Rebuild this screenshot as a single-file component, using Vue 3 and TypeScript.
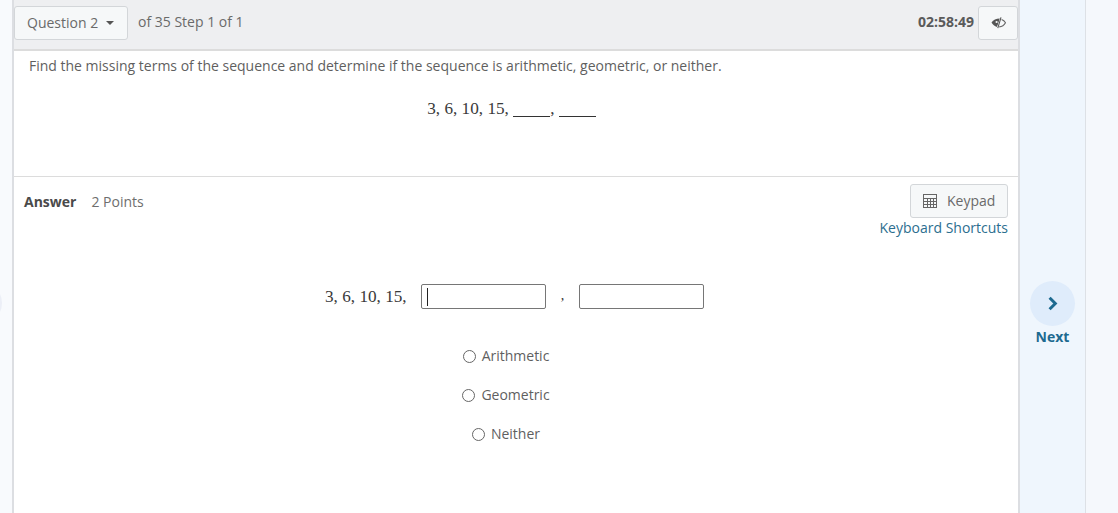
<script setup lang="ts">
const options = ['Arithmetic', 'Geometric', 'Neither'];
</script>

<template>
  <div class="page">
    <div class="gutter">
      <span class="prev-edge"></span>
    </div>
    <main class="main">
      <header class="topbar">
        <button class="btn question-btn">Question 2 <span class="caret"></span></button>
        <span class="step">of 35 Step 1 of 1</span>
        <span class="timer">02:58:49</span>
        <button class="btn eye-btn" aria-label="Hide timer">
          <svg width="15" height="12" viewBox="0 0 15 12">
            <path d="M0.5 5.6 C2.4 3 5 1.6 8.8 1.6 L6 10 C3.6 9.4 1.8 7.8 0.5 5.6 Z" fill="#555" />
            <circle cx="5.6" cy="5" r="1.1" fill="#f6f8f9" />
            <path d="M10.8 0.2 L7.2 11.6" stroke="#f6f8f9" stroke-width="2.6" />
            <path d="M10.6 2.6 C12.2 3.2 13.6 4.3 14.5 5.8 C13.2 8.2 11 9.7 8.2 9.9" fill="none" stroke="#666" stroke-width="1.1" />
            <path d="M10 0.4 L6.8 11.2" stroke="#555" stroke-width="1.1" />
          </svg>
        </button>
      </header>

      <section class="question">
        <p class="prompt">Find the missing terms of the sequence and determine if the sequence is arithmetic, geometric, or neither.</p>
        <div class="sequence">
          3, 6, 10, 15, <span class="blank"></span>, <span class="blank"></span>
        </div>
      </section>

      <section class="answer">
        <div class="answer-head">
          <div class="answer-title">
            <strong>Answer</strong>
            <span class="points">2 Points</span>
          </div>
          <div class="answer-tools">
            <button class="btn keypad-btn">
              <svg width="14" height="14" viewBox="0 0 14 14">
                <rect x="0.5" y="0.5" width="13" height="13" fill="none" stroke="#666" />
                <path d="M1 4.5H13M1 7.5H13M1 10.5H13M4.5 5V13M7.5 5V13M10.5 5V13" stroke="#666" stroke-width="1" />
              </svg>
              Keypad
            </button>
            <a class="shortcuts">Keyboard Shortcuts</a>
          </div>
        </div>

        <div class="fill-row">
          <span class="fill-text">3, 6, 10, 15,</span>
          <span class="fill-box first"><span class="cursor"></span></span>
          <span class="fill-comma">,</span>
          <span class="fill-box"></span>
        </div>

        <div class="options">
          <label v-for="opt in options" :key="opt" class="option">
            <span class="radio"></span>{{ opt }}
          </label>
        </div>
      </section>
    </main>

    <aside class="next-col">
      <button class="next-circle" aria-label="Next">
        <svg width="12" height="15" viewBox="0 0 12 15">
          <path d="M2.6 1.8 L8.3 7.5 L2.6 13.2" fill="none" stroke="#1d6a90" stroke-width="3" />
        </svg>
      </button>
      <span class="next-label">Next</span>
    </aside>
    <div class="far-col"></div>
  </div>
</template>

<style>
html, body { margin: 0; height: 100%; overflow: hidden; }
</style>

<style scoped>
.page {
  display: flex;
  width: 1118px;
  height: 513px;
  overflow: hidden;
  font-family: "Open Sans", sans-serif;
  font-size: 14px;
  color: #5f5f5f;
  background: #fff;
}
.gutter {
  position: relative;
  width: 12px;
  flex: none;
  background: #f8fafd;
}
.prev-edge {
  position: absolute;
  left: -18px;
  top: 288px;
  width: 20px;
  height: 30px;
  border-radius: 50%;
  background: #eceff7;
}
.main {
  width: 1008px;
  flex: none;
  box-sizing: border-box;
  border-left: 2px solid #dcdee2;
  border-right: 2px solid #dcdee2;
  display: flex;
  flex-direction: column;
}
.topbar {
  height: 43px;
  display: flex;
  align-items: flex-start;
  padding: 6px 0 0 0;
  background: #eeeff1;
  border-bottom: 2px solid #dcdcdc;
}
.btn {
  font: inherit;
  color: #6a6a6a;
  background: #f6f8f9;
  border: 1px solid #d3d6d9;
  border-radius: 3px;
  box-sizing: border-box;
  padding: 0;
  display: inline-flex;
  align-items: center;
}
.question-btn {
  width: 114px;
  height: 34px;
  padding-left: 12px;
  padding-bottom: 2px;
  gap: 4px;
}
.caret {
  display: inline-block;
  margin-left: 4px;
  margin-top: 2px;
  border-left: 4px solid transparent;
  border-right: 4px solid transparent;
  border-top: 4px solid #555;
}
.step {
  margin-left: 10px;
  line-height: 32px;
  color: #6a6a6a;
}
.timer {
  margin-left: auto;
  font-weight: 700;
  line-height: 32px;
  color: #5a5a5a;
}
.eye-btn {
  width: 40px;
  height: 34px;
  justify-content: center;
  margin-left: 4px;
}
.question {
  height: 126px;
  box-sizing: border-box;
  border-bottom: 1px solid #dcdcdc;
  padding: 5px 15px 0;
}
.prompt {
  margin: 0;
  line-height: 19px;
  color: #5f5f5f;
}
.sequence {
  margin-top: 22px;
  text-align: center;
  font-family: "Liberation Serif", serif;
  font-size: 17.2px;
  line-height: 24px;
  color: #3a3a3a;
  padding-right: 9px;
}
.blank {
  display: inline-block;
  width: 37px;
  border-bottom: 1px solid #333;
  vertical-align: -3px;
}
.answer {
  flex: 1;
  padding: 7px 10px 0;
}
.answer-head {
  display: flex;
  justify-content: space-between;
  align-items: flex-start;
}
.answer-title {
  display: flex;
  align-items: baseline;
  gap: 15px;
  padding-top: 8px;
  line-height: 20px;
}
.answer-title strong { color: #4a4a4a; }
.points { color: #6e6e6e; }
.answer-tools {
  display: flex;
  flex-direction: column;
  align-items: flex-end;
}
.keypad-btn {
  width: 98px;
  height: 34px;
  padding-left: 12px;
  padding-bottom: 1px;
  gap: 10px;
}
.shortcuts {
  line-height: 20px;
  color: #2c6e8f;
}
.fill-row {
  display: flex;
  align-items: center;
  height: 26px;
  margin-top: 45px;
  padding-left: 301px;
}
.fill-text {
  font-family: "Liberation Serif", serif;
  font-size: 17.2px;
  color: #3a3a3a;
  width: 96px;
  padding-top: 1px;
}
.fill-box {
  position: relative;
  width: 125px;
  height: 25px;
  box-sizing: border-box;
  border: 1px solid #767676;
  border-radius: 2px;
  background: #fff;
}
.cursor {
  position: absolute;
  left: 5px;
  top: 3px;
  width: 1px;
  height: 18px;
  background: #222;
}
.fill-comma {
  width: 33px;
  text-align: center;
  font-family: "Liberation Serif", serif;
  color: #333;
}
.options {
  display: flex;
  flex-direction: column;
  align-items: center;
  gap: 19px;
  margin-top: 37px;
  padding-right: 20px;
}
.option {
  display: flex;
  align-items: center;
  line-height: 20px;
  color: #5f5f5f;
}
.radio {
  width: 13px;
  height: 13px;
  box-sizing: border-box;
  border: 1px solid #666;
  border-radius: 50%;
  margin-right: 6px;
}
.next-col {
  width: 65px;
  flex: none;
  background: #eff6fd;
  display: flex;
  flex-direction: column;
  align-items: center;
  padding-top: 281px;
  box-sizing: border-box;
}
.next-circle {
  width: 45px;
  height: 45px;
  border: none;
  border-radius: 50%;
  background: #dfecfb;
  display: flex;
  align-items: center;
  justify-content: center;
  padding: 0;
}
.next-label {
  margin-top: 1px;
  font-weight: 700;
  line-height: 20px;
  color: #1d6a90;
}
.far-col {
  flex: 1;
  background: #f5f8fc;
  border-left: 1px solid #dde1e6;
}
</style>
